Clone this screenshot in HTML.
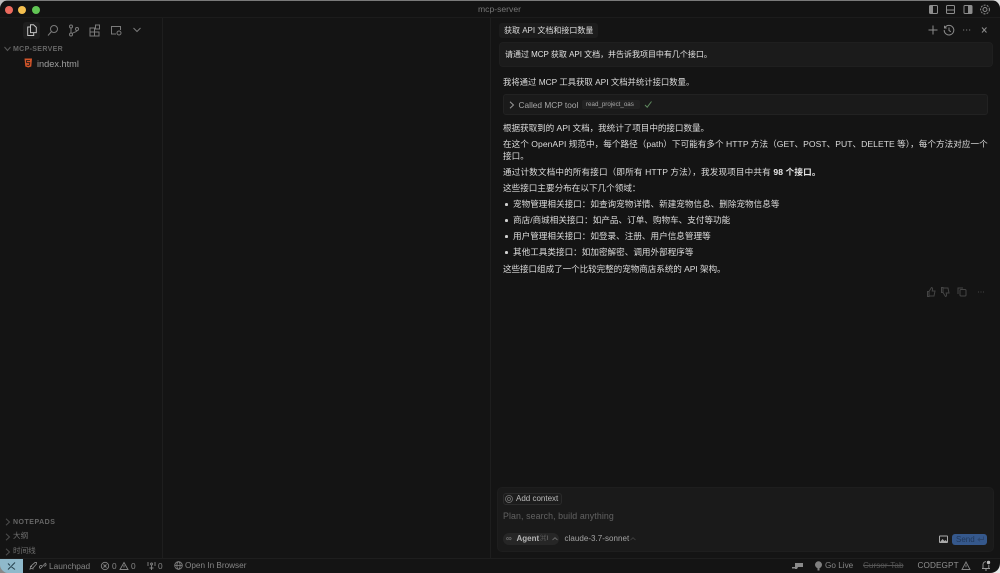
<!DOCTYPE html>
<html lang="zh"><head><meta charset="utf-8"><style>
html,body{margin:0;padding:0;background:#141414;width:1000px;height:573px;overflow:hidden}
body{position:relative;font-family:"Liberation Sans","Noto Sans CJK SC",sans-serif;color:#d0d0d0;font-size:9px}
.t{position:absolute;white-space:nowrap;line-height:12px}
.box{position:absolute;box-sizing:border-box}
svg{position:absolute;overflow:visible;fill:none}
.m{font-size:8.6px;color:#dcdcdc}
b{font-weight:700;color:#e8e8e8}
.dot{position:absolute;width:2.6px;height:2.6px;border-radius:50%;background:#d0d0d0;left:505.4px}
</style></head><body>
<div class="box" style="left:0;top:0;width:1000px;height:1px;background:#7a7a7a"></div>
<div class="box" style="left:0;top:1px;width:1000px;height:17px;background:#131313;border-bottom:1px solid #1c1c1c"></div>
<div class="box" style="left:162px;top:18px;width:1px;height:540px;background:#1e1e1e"></div>
<div class="box" style="left:490px;top:18px;width:1px;height:540px;background:#1e1e1e"></div>
<!-- traffic lights -->
<div class="box" style="left:5px;top:6px;width:8px;height:8px;border-radius:50%;background:#ec6a5e"></div>
<div class="box" style="left:18px;top:6px;width:8px;height:8px;border-radius:50%;background:#f4bf4f"></div>
<div class="box" style="left:32px;top:6px;width:8px;height:8px;border-radius:50%;background:#61c554"></div>
<div class="t" style="left:478px;top:3px;font-size:8.6px;color:#777">mcp-server</div>
<!-- title right icons -->
<svg style="left:928px;top:4px" width="70" height="12" stroke="#8c8c8c"><rect x="1.5" y="1.5" width="8" height="8" rx="1"/><rect x="2" y="2" width="3" height="7" fill="#8c8c8c" stroke="none"/><rect x="18.5" y="1.5" width="8" height="8" rx="1"/><path d="M19 6h7"/><rect x="36" y="1.5" width="8" height="8" rx="1"/><rect x="40" y="2" width="3.5" height="7" fill="#8c8c8c" stroke="none"/><circle cx="57" cy="5.5" r="2"/><circle cx="57" cy="5.5" r="4.4" stroke-dasharray="2 1.2"/></svg>
<!-- activity icons -->
<div class="box" style="left:23px;top:22px;width:17px;height:17px;border-radius:3px;background:#1e1e1e"></div>
<svg style="left:26px;top:24px" width="12" height="13" stroke="#c4c4c4"><path d="M4.5 .8h3l2.800 2.600v5.200h-5.800z"/><path d="M4.500 3h-2.800v8.500h6v-2.800"/></svg>
<svg style="left:47px;top:24px" width="12" height="13" stroke="#7a7a7a"><circle cx="7" cy="5" r="3.5"/><path d="M4.500 7.500L1 11.500"/></svg>
<svg style="left:68px;top:24px" width="12" height="13" stroke="#7a7a7a"><circle cx="3" cy="2.500" r="1.500"/><circle cx="3" cy="10.500" r="1.500"/><circle cx="9" cy="5" r="1.500"/><path d="M3 4v5M9 6.500c0 1.500-3 1.500-5 3"/></svg>
<svg style="left:89px;top:24px" width="12" height="13" stroke="#7a7a7a"><rect x="1" y="4" width="4.500" height="4"/><rect x="1" y="8" width="4.500" height="4"/><rect x="5.500" y="8" width="4.500" height="4"/><rect x="6.500" y="1" width="4" height="4"/></svg>
<svg style="left:110px;top:24px" width="13" height="13" stroke="#7a7a7a"><path d="M6 10H1.500V2.500h9V6"/><circle cx="9" cy="9" r="2"/></svg>
<svg style="left:132px;top:27px" width="10" height="6" stroke="#7a7a7a"><path d="M1.500 1L5 4.500L8.500 1"/></svg>
<!-- tree -->
<svg style="left:4px;top:46px" width="8" height="6" stroke="#5a5a5a"><path d="M.5 1L3.500 4.500L6.500 1"/></svg>
<div class="t" style="left:13px;top:43.5px;font-size:7px;font-weight:700;color:#666;letter-spacing:.35px">MCP-SERVER</div>
<svg style="left:24px;top:58px" width="9" height="11"><path d="M.5 .5h7.500l-.7 8-3 1-3-1z" fill="#d2552a"/><path d="M6 2.500H2.500l.2 2.200h3.100l-.2 2.300-1.500.5-1.400-.5" stroke="#141414" stroke-width=".8"/></svg>
<div class="t" style="left:37px;top:58px;font-size:9.2px;color:#a0a0a0">index.html</div>
<svg style="left:5px;top:518px" width="6" height="8" stroke="#4e4e4e"><path d="M1 .7L4.500 4L1 7.300"/></svg>
<div class="t" style="left:13px;top:516.5px;font-size:7px;font-weight:700;color:#666;letter-spacing:.5px">NOTEPADS</div>
<svg style="left:5px;top:533px" width="6" height="8" stroke="#4e4e4e"><path d="M1 .7L4.500 4L1 7.300"/></svg>
<div class="t" style="left:13px;top:530px;font-size:7.6px;color:#707070">大纲</div>
<svg style="left:5px;top:548px" width="6" height="8" stroke="#4e4e4e"><path d="M1 .7L4.500 4L1 7.300"/></svg>
<div class="t" style="left:13px;top:545px;font-size:7.6px;color:#707070">时间线</div>
<!-- chat header -->
<div class="box" style="left:499px;top:23px;width:99px;height:15px;border-radius:3px;background:#1c1c1c"></div>
<div class="t" style="left:504px;top:24.5px;font-size:8px;color:#dcdcdc">获取 API 文档和接口数量</div>
<svg style="left:927px;top:24px" width="70" height="13" stroke="#8c8c8c"><path d="M1.500 6h9M6 1.500v9"/><path d="M18 3.500a4.800 4.800 0 1 1-.8 2.500M17.500 1.800v2.200h2.200M22 3.500v3l1.800 1.200"/><path d="M36 6h1.200M39 6h1.200M42 6h1.200" stroke="#7a7a7a"/><path d="M55 3.500l4.500 5M59.500 3.500l-4.500 5"/></svg>
<!-- user msg -->
<div class="box" style="left:499px;top:42px;width:494px;height:25px;border-radius:4px;background:#1b1b1b;border:1px solid #1f1f1f"></div>
<div class="t m" style="left:505px;top:49px;font-size:8px;letter-spacing:-.02px;color:#e4e4e4">请通过 MCP 获取 API 文档，并告诉我项目中有几个接口。</div>
<div class="t m" style="left:503px;top:75.5px;font-size:8.35px">我将通过 MCP 工具获取 API 文档并统计接口数量。</div>
<!-- tool card -->
<div class="box" style="left:503px;top:94px;width:485px;height:21px;border-radius:3px;background:#1a1a1a;border:1px solid #222"></div>
<svg style="left:509px;top:101px" width="6" height="8" stroke="#999"><path d="M1 .7L4.500 4L1 7.300"/></svg>
<div class="t" style="left:518.5px;top:98.5px;font-size:8.3px;color:#a8a8a8">Called MCP tool</div>
<div class="box" style="left:582px;top:100px;width:58px;height:9px;border-radius:2px;background:#222"></div>
<div class="t" style="left:586px;top:98.5px;font-size:6.2px;color:#a8a8a8">read_project_oas</div>
<svg style="left:644px;top:100px" width="9" height="9" stroke="#5f8a5f"><path d="M1 5l2.200 2.200L7.500 1.500"/></svg>
<!-- body -->
<div class="t m" style="left:503px;top:122px;letter-spacing:-.06px">根据获取到的 API 文档，我统计了项目中的接口数量。</div>
<div class="t m" style="left:503px;top:138px;letter-spacing:.03px">在这个 OpenAPI 规范中，每个路径（path）下可能有多个 HTTP 方法（GET、POST、PUT、DELETE 等），每个方法对应一个</div>
<div class="t m" style="left:503px;top:150px">接口。</div>
<div class="t m" style="left:503px;top:166px;letter-spacing:.13px">通过计数文档中的所有接口（即所有 HTTP 方法），我发现项目中共有 <b>98 个接口。</b></div>
<div class="t m" style="left:503px;top:182px">这些接口主要分布在以下几个领域：</div>
<div class="dot" style="top:203px"></div>
<div class="t m" style="left:513px;top:198px">宠物管理相关接口：如查询宠物详情、新建宠物信息、删除宠物信息等</div>
<div class="dot" style="top:219px"></div>
<div class="t m" style="left:513px;top:214px">商店/商城相关接口：如产品、订单、购物车、支付等功能</div>
<div class="dot" style="top:235px"></div>
<div class="t m" style="left:513px;top:230px">用户管理相关接口：如登录、注册、用户信息管理等</div>
<div class="dot" style="top:251px"></div>
<div class="t m" style="left:513px;top:246px">其他工具类接口：如加密解密、调用外部程序等</div>
<div class="t m" style="left:503px;top:263px;letter-spacing:-.08px">这些接口组成了一个比较完整的宠物商店系统的 API 架构。</div>
<!-- feedback -->
<svg style="left:926px;top:286px" width="62" height="12" stroke="#444"><path d="M1.500 5.500h1.500v5h-1.500zM3 5.500l2.500-4c1 0 1.200 1 1 2l-.3 1.500h2.800l-1 5h-5"/><path d="M17 6.500h-1.500v-5H17zM17 6.500l2.500 4c1 0 1.200-1 1-2l-.3-1.500h2.800l-1-5h-5"/><rect x="34" y="3.500" width="6" height="6.500" rx="1"/><path d="M32 8V2h5"/><path d="M52 6h1M54.500 6h1M57 6h1"/></svg>
<!-- input -->
<div class="box" style="left:497px;top:487px;width:497px;height:65px;border-radius:5px;background:#1a1a1a;border:1px solid #1e1e1e"></div>
<div class="box" style="left:503px;top:493px;width:59px;height:12px;border-radius:3px;background:#1c1c1c;border:1px solid #2a2a2a"></div>
<svg style="left:505px;top:495px" width="9" height="9" stroke="#777" stroke-width=".8"><circle cx="4" cy="4" r="3.500"/><circle cx="4" cy="4" r="1.500"/></svg>
<div class="t" style="left:516px;top:493px;font-size:8px;color:#bbb">Add context</div>
<div class="t" style="left:503px;top:509.5px;font-size:8.8px;color:#626262;letter-spacing:.1px">Plan, search, build anything</div>
<div class="box" style="left:503px;top:533px;width:56px;height:12px;border-radius:6px;background:#262626"></div>
<div class="t" style="left:506px;top:533px;font-size:8px;color:#888">∞</div>
<div class="t" style="left:516.5px;top:533px;font-size:8px;font-weight:700;color:#b4b4b4">Agent</div>
<div class="t" style="left:540px;top:533px;font-size:6.5px;color:#777">⌘I</div>
<svg style="left:552px;top:537px" width="6" height="4" stroke="#777" stroke-width=".8"><path d="M.5 3L3 .7L5.500 3"/></svg>
<div class="t" style="left:564.5px;top:533px;font-size:8px;color:#a4a4a4;letter-spacing:.04px">claude-3.7-sonnet</div>
<svg style="left:630px;top:537px" width="6" height="4" stroke="#444" stroke-width=".8"><path d="M.5 3L3 .7L5.500 3"/></svg>
<svg style="left:939px;top:535px" width="9" height="9" stroke="#aaa"><rect x=".5" y="1" width="8" height="6.500" rx=".5"/><path d="M1 7l2.500-3 2 2 1-1 2 2" fill="#aaa" stroke="none"/></svg>
<div class="box" style="left:952px;top:534px;width:35px;height:11px;border-radius:3px;background:#35588c"></div>
<div class="t" style="left:956px;top:533.5px;font-size:8px;color:#21385a">Send</div>
<svg style="left:977px;top:536px" width="8" height="7" stroke="#2c466e" stroke-width=".9"><path d="M6.500 .5v3h-5M3 1.800L1 3.500L3 5.300"/></svg>
<!-- status bar -->
<div class="box" style="left:0;top:558px;width:1000px;height:15px;background:#141414;border-top:1px solid #1e1e1e"></div>
<div class="box" style="left:0;top:559px;width:22.5px;height:14px;background:#8fb9cb"></div>
<svg style="left:7px;top:561px" width="9" height="10" stroke="#26404c"><path d="M1 8.500L4 5.500M4 5.500l4 3M4.500 5L8 1.500M1 2.500l2 2"/></svg>
<svg style="left:28px;top:561px" width="20" height="10" stroke="#858585" stroke-width=".9"><path d="M2 8l1-3 4-3.500 1.500 0v1.500l-3.500 4zM2 5.500h2M5 6.500v2"/><path d="M13 7l4-4.500M14 5a1.500 1.500 0 1 0-1 2.500M16 5a1.500 1.500 0 1 0 1-3"/></svg>
<div class="t" style="left:49px;top:560px;font-size:8.3px;color:#868686">Launchpad</div>
<svg style="left:101px;top:561px" width="30" height="10" stroke="#858585" stroke-width=".9"><circle cx="4" cy="5" r="3.700"/><path d="M2.500 3.500l3 3M5.500 3.500l-3 3M23 1.500l4 7h-8zM23 4v2.500"/></svg>
<div class="t" style="left:112px;top:560px;font-size:8.3px;color:#868686">0</div>
<div class="t" style="left:131px;top:560px;font-size:8.3px;color:#868686">0</div>
<svg style="left:147px;top:561px" width="10" height="10" stroke="#858585" stroke-width=".9"><circle cx="4.500" cy="3" r="1"/><path d="M4.500 4v5M1 1v4M8 1v4M2.500 7h4"/></svg>
<div class="t" style="left:158px;top:560px;font-size:8.3px;color:#868686">0</div>
<svg style="left:174px;top:561px" width="10" height="10" stroke="#858585" stroke-width=".8"><circle cx="4.500" cy="4.500" r="3.800"/><ellipse cx="4.500" cy="4.500" rx="1.600" ry="3.800"/><path d="M.7 4.500h7.600"/></svg>
<div class="t" style="left:185px;top:560px;font-size:8.2px;color:#868686">Open In Browser</div>
<svg style="left:792px;top:561px" width="11" height="10"><path d="M3 2h8v4H6L5 8H3z" fill="#8a8a8a"/><rect x="0" y="6" width="3" height="1.500" fill="#8a8a8a"/></svg>
<svg style="left:814px;top:561px" width="9" height="10"><circle cx="4.500" cy="3.800" r="3.500" fill="#808080"/><rect x="3.500" y="6" width="2" height="3.500" fill="#808080"/></svg>
<div class="t" style="left:825px;top:560px;font-size:8.2px;color:#868686">Go Live</div>
<div class="t" style="left:863px;top:560px;font-size:8.2px;color:#555;text-decoration:line-through">Cursor-Tab</div>
<div class="t" style="left:917.5px;top:560px;font-size:8.2px;color:#909090;letter-spacing:.1px">CODEGPT</div>
<svg style="left:961px;top:561px" width="10" height="10" stroke="#858585" stroke-width=".9"><path d="M5 1l4 7.500H1zM5 3.800v2.500"/></svg>
<svg style="left:981px;top:560px" width="10" height="11"><path d="M2 8V4.500a2.800 2.800 0 0 1 3-2.800M7.800 5V8M1 8.500h8M4 10h2" stroke="#999" stroke-width=".9"/><circle cx="7.500" cy="2.500" r="1.700" fill="#bbb"/></svg>
<!-- corners -->
<svg style="left:990px;top:563px" width="10" height="10"><path d="M10 0V10H0C6 10 10 6 10 0z" fill="#e8e8e8"/></svg>
<svg style="left:0;top:563px" width="10" height="10"><path d="M0 2V10H8C4 10 0 6 0 2z" fill="#888"/></svg>
<svg style="left:0;top:0" width="8" height="8"><path d="M0 0H8C4 0 0 4 0 8z" fill="#bbb"/></svg>
<svg style="left:992px;top:0" width="8" height="8"><path d="M0 0H8V8C8 4 4 0 0 0z" fill="#ddd"/></svg>
</body></html>
